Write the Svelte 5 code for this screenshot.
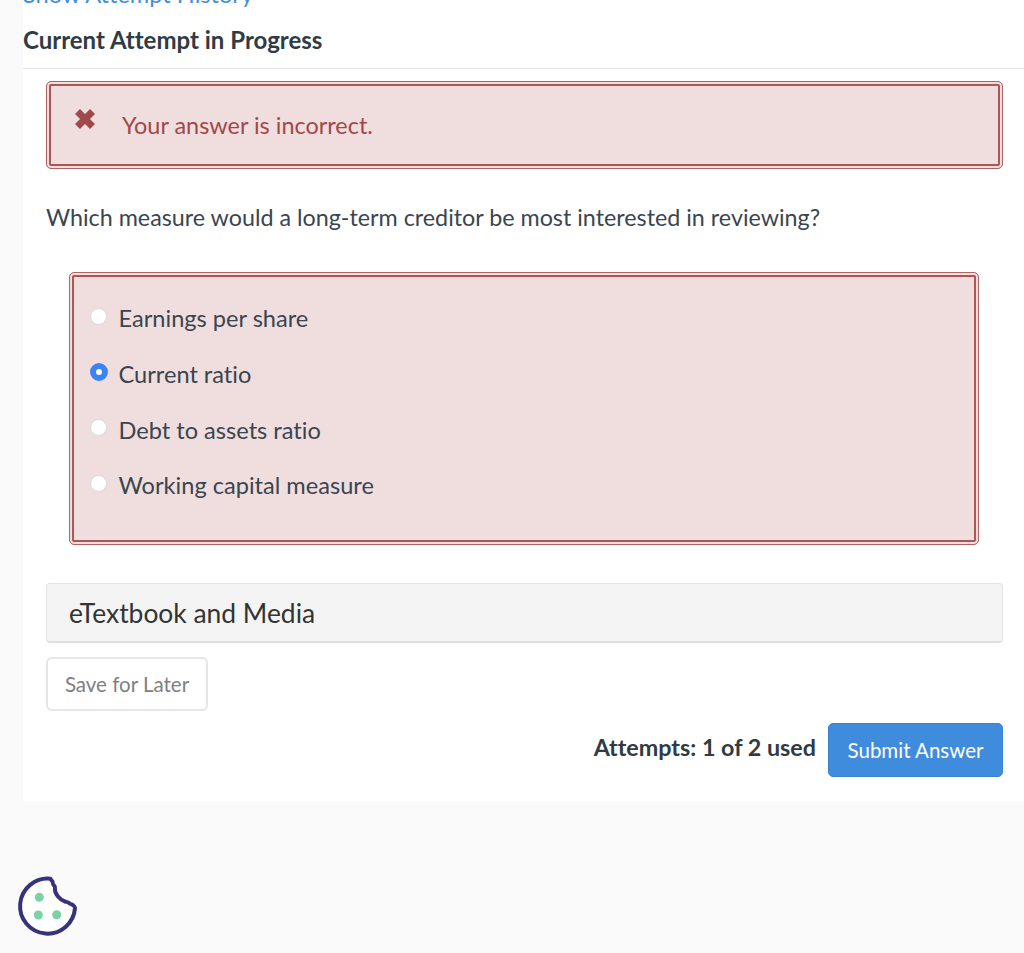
<script>
  const options = [
    { label: 'Earnings per share', checked: false },
    { label: 'Current ratio', checked: true },
    { label: 'Debt to assets ratio', checked: false },
    { label: 'Working capital measure', checked: false }
  ];
</script>

<div class="page">
  <div class="panel">
    <a class="history" href="#history">Show Attempt History</a>
    <h2 class="title">Current Attempt in Progress</h2>
    <div class="body">
      <div class="alert">
        <svg class="cross" viewBox="0 0 22 22" width="22" height="22">
          <path d="M3.500 3.500 18.500 18.500M18.500 3.500 3.500 18.500" fill="none" stroke="#9f4a4a" stroke-width="7" />
        </svg>
        <span>Your answer is incorrect.</span>
      </div>

      <p class="question">Which measure would a long-term creditor be most interested in reviewing?</p>

      <div class="choices">
        {#each options as opt}
          <div class="choice">
            <span class="radio" class:checked={opt.checked}></span>
            <span>{opt.label}</span>
          </div>
        {/each}
      </div>

      <div class="media">eTextbook and Media</div>

      <button class="save">Save for Later</button>

      <div class="footer">
        <span class="attempts">Attempts: 1 of 2 used</span>
        <button class="submit">Submit Answer</button>
      </div>
    </div>
  </div>

  <svg class="cookie" viewBox="0 0 76 76" width="76" height="76">
    <path d="M40.500 10.800C41 13 43.500 13 43 15.500 42.800 17.500 45.500 17.500 45 20 44.500 23 46 26 48 28.500 50 31 52.500 32.800 55 33.500 56.500 34 58 34 59 35 60 36.500 61.500 35.800 62.800 37 64 38 65 38.500 65 40A27.500 27.500 0 1 1 40.500 10.800Z" fill="#fff" stroke="#37337a" stroke-width="4" stroke-linejoin="round" />
    <circle cx="29.300" cy="29.300" r="4.500" fill="#7bd3a3" />
    <circle cx="28.300" cy="47" r="4.500" fill="#7bd3a3" />
    <circle cx="46.700" cy="46.700" r="4.500" fill="#7bd3a3" />
  </svg>
</div>

<style>
  :global(body) {
    margin: 0;
    background: #fafafa;
  }
  .page {
    height: 953px;
    overflow: hidden;
    position: relative;
    font-family: Lato, "Open Sans", sans-serif;
    font-variant-ligatures: none;
    color: #3a4550;
  }
  .panel {
    margin-left: 23px;
    height: 801px;
    background: #fff;
    overflow: hidden;
  }
  .history {
    display: block;
    margin-top: -20px;
    height: 29px;
    line-height: 29px;
    font-size: 23.600px;
    color: #3f8fe0;
    text-decoration: none;
  }
  .title {
    margin: 0;
    height: 60px;
    line-height: 62px;
    box-sizing: border-box;
    font-size: 24px;
    font-weight: 700;
    color: #2f3b45;
    border-bottom: 1px solid #e6e6e6;
  }
  .body {
    padding: 12px 21px 0 23px;
  }
  .alert {
    display: flex;
    align-items: center;
    height: 88px;
    box-sizing: border-box;
    padding-left: 26.500px;
    gap: 26.500px;
    background: #f0dede;
    border: 1px solid #b06462;
    box-shadow: inset 0 0 0 2px #f0dede, inset 0 0 0 4px #ad5654;
    border-radius: 5px;
    color: #a04848;
    font-size: 23.450px;
  }
  .cross {
    flex: none;
    margin-top: -13px;
  }
  .question {
    margin: 31px 0 0;
    font-size: 23.300px;
    line-height: 34px;
  }
  .choices {
    margin: 38px 24px 0 23px;
    height: 273px;
    box-sizing: border-box;
    padding: 17.300px 0 0 19.500px;
    background: #f0dede;
    border: 1px solid #b06462;
    box-shadow: inset 0 0 0 2px #f0dede, inset 0 0 0 4px #ad5654;
    border-radius: 5px;
    font-size: 23.600px;
  }
  .choice {
    display: flex;
    align-items: center;
    gap: 11px;
    height: 55.700px;
  }
  .radio {
    width: 17px;
    height: 17px;
    margin: -4px 1px 0 0;
    border-radius: 50%;
    background: #fff;
    border: 1px solid #d8d8d8;
    box-sizing: border-box;
  }
  .radio.checked {
    border: 6px solid #3b82f6;
    width: 18px;
    height: 18px;
    margin-right: 0;
  }
  .media {
    margin-top: 38px;
    height: 60px;
    box-sizing: border-box;
    line-height: 58px;
    padding-left: 22px;
    background: #f4f4f4;
    border: 1px solid #e4e4e4;
    border-bottom: 2px solid #e0e0e0;
    border-radius: 4px;
    font-size: 26.400px;
    color: #333;
  }
  .save {
    display: block;
    margin-top: 14px;
    width: 162px;
    height: 54px;
    background: #fff;
    border: 2px solid #e6e6e6;
    border-radius: 6px;
    font: 400 20.500px Lato, sans-serif;
    font-variant-ligatures: none;
    color: #808080;
  }
  .footer {
    display: flex;
    justify-content: flex-end;
    align-items: center;
    gap: 12px;
    margin-top: 12px;
  }
  .attempts {
    font-size: 23.300px;
    font-weight: 700;
    color: #2f3b45;
    margin-top: -7px;
  }
  .submit {
    width: 175px;
    height: 54px;
    background: #3f8cdd;
    border: 1px solid #3a82cf;
    border-radius: 5px;
    font: 400 20.500px Lato, sans-serif;
    font-variant-ligatures: none;
    color: #fff;
  }
  .cookie {
    position: absolute;
    left: 10px;
    top: 868px;
  }
</style>
